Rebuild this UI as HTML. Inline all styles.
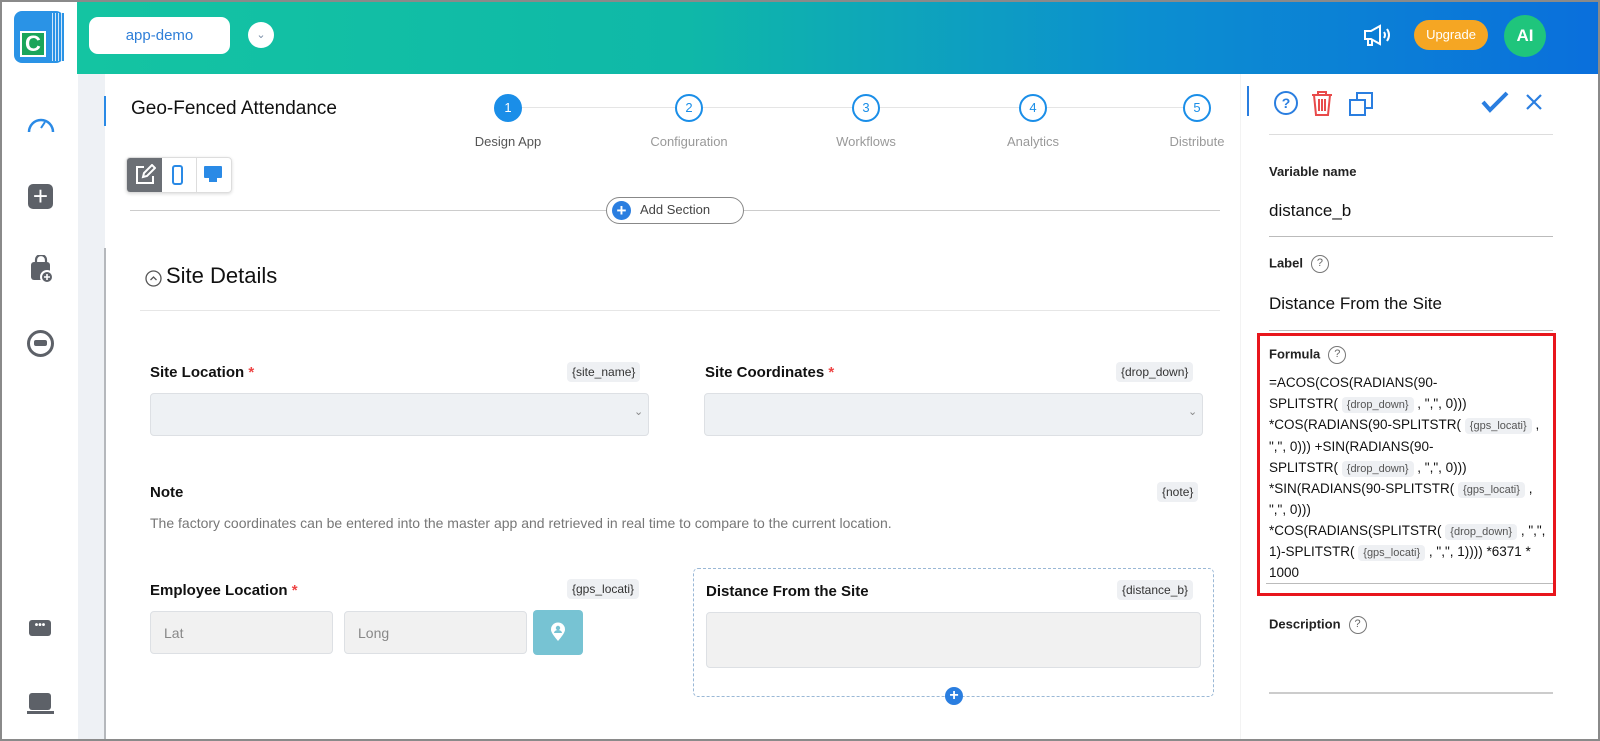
<!DOCTYPE html>
<html><head><meta charset="utf-8"><style>
*{box-sizing:border-box;margin:0;padding:0}
body{width:1600px;height:741px;overflow:hidden;font-family:"Liberation Sans",sans-serif;background:#fff;position:relative;color:#222}
.a{position:absolute}
.frame{left:0;top:0;width:1600px;height:741px;border:2px solid #8a8a8a;border-right:none;z-index:50;pointer-events:none}
.frame2{left:1598px;top:0;width:2px;height:741px;background:#8a8a8a;z-index:50}
.tag{position:absolute;background:#eef0f3;border-radius:4px;font-size:12px;color:#333;padding:3px 5px}
.lbl{position:absolute;font-size:15px;font-weight:bold;color:#111}
.req{color:#e44}
.inp{position:absolute;background:#eef1f4;border:1px solid #dde0e4;border-radius:4px}
.step{position:absolute;width:28px;height:28px;border-radius:50%;border:2px solid #1a8ee8;color:#1a8ee8;font-size:13px;text-align:center;line-height:24px;background:#fff}
.stl{position:absolute;font-size:13px;color:#999;text-align:center;width:120px}
.fl{position:absolute;left:1269px;font-size:13.5px;color:#111;white-space:nowrap}
.ft{background:#eef0f3;border-radius:4px;font-size:11px;color:#555;padding:2px 5px}
.q{display:inline-block;width:18px;height:18px;border:1.5px solid #777;border-radius:50%;font-size:11px;text-align:center;line-height:15px;color:#666;font-weight:normal;vertical-align:middle;margin-left:8px}
</style></head><body>
<div class="a frame"></div><div class="a frame2"></div>
<!-- header -->
<div class="a" style="left:77px;top:0;width:1523px;height:74px;background:linear-gradient(90deg,#14c4a2 0%,#0fb8a8 40%,#0c8fd0 70%,#0a6fdc 100%)"></div>
<div class="a" style="left:0;top:0;width:77px;height:78px;background:#fff"></div>
<div class="a" style="left:14px;top:11px;width:50px;height:52px;background:#2a93e6;border-radius:8px"></div>
<div class="a" style="left:52px;top:13px;width:12px;height:48px;background:repeating-linear-gradient(90deg,#cfe6fa 0 1px,#2a93e6 1px 3px)"></div>
<div class="a" style="left:20px;top:31px;width:26px;height:26px;background:#1aa55a;border:2px solid #fff;color:#fff;font-weight:bold;font-size:22px;text-align:center;line-height:22px">C</div>
<div class="a" style="left:89px;top:17px;width:141px;height:37px;background:#fff;border-radius:9px;color:#2f7fd8;font-size:15px;text-align:center;line-height:37px">app-demo</div>
<div class="a" style="left:248px;top:22px;width:26px;height:26px;background:#fff;border-radius:50%;color:#7a8ea8;font-size:11px;text-align:center;line-height:26px">&#8964;</div>
<svg class="a" style="left:1362px;top:23px" width="32" height="26" viewBox="0 0 32 26" fill="none" stroke="#fff" stroke-width="2"><path d="M3 8h6l9-5v18l-9-5H3z"/><path d="M6 16v6h4v-6"/><path d="M22 9q2 3 0 6M25 6q4 6 0 12"/></svg>
<div class="a" style="left:1414px;top:20px;width:74px;height:30px;background:#f5a623;border-radius:15px;color:#fff;font-size:13px;text-align:center;line-height:30px">Upgrade</div>
<div class="a" style="left:1504px;top:15px;width:42px;height:42px;background:#1fc57c;border-radius:50%;color:#fff;font-size:17px;font-weight:bold;text-align:center;line-height:42px">AI</div>
<!-- sidebar -->
<div class="a" style="left:0;top:78px;width:78px;height:663px;background:#fff"></div>
<div class="a" style="left:78px;top:74px;width:27px;height:667px;background:#eef1f5"></div>
<div class="a" style="left:104px;top:248px;width:2px;height:493px;background:#b5b8bc"></div>
<div class="a" style="left:104px;top:96px;width:2px;height:30px;background:#2a8ae6"></div>
<svg class="a" style="left:25px;top:110px" width="32" height="26" viewBox="0 0 32 26" fill="none" stroke="#2a8ae6" stroke-width="2.5"><path d="M4 22A12 12 0 1 1 28 22"/><path d="M16 18l4-6" stroke-width="2"/></svg>
<div class="a" style="left:28px;top:184px;width:25px;height:25px;background:#5d6168;border-radius:5px;color:#fff;font-size:26px;text-align:center;line-height:24px">+</div>
<svg class="a" style="left:29px;top:255px" width="26" height="30" viewBox="0 0 26 30"><path d="M7 7V5a5 5 0 0 1 10 0v2" fill="none" stroke="#5d6168" stroke-width="2.2"/><rect x="2" y="7" width="19" height="18" rx="3" fill="#5d6168"/><circle cx="18" cy="22" r="6" fill="#5d6168" stroke="#fff" stroke-width="2"/><path d="M15 22h6M18 19v6" stroke="#fff" stroke-width="1.6"/></svg>
<div class="a" style="left:27px;top:330px;width:27px;height:27px;border:3px solid #5d6168;border-radius:50%"></div>
<div class="a" style="left:34px;top:340px;width:13px;height:6px;background:#5d6168;border-radius:2px"></div>
<div class="a" style="left:29px;top:620px;width:22px;height:16px;background:#5d6168;border-radius:3px;color:#fff;font-size:10px;text-align:center;line-height:12px;font-weight:bold">•••</div>
<div class="a" style="left:29px;top:693px;width:22px;height:17px;background:#5d6168;border-radius:3px"></div>
<div class="a" style="left:27px;top:711px;width:27px;height:3px;background:#5d6168"></div>
<!-- title -->
<div class="a" style="left:131px;top:98px;font-size:19px;color:#111">Geo-Fenced Attendance</div>
<div class="a" style="left:126px;top:157px;width:106px;height:36px;border:1px solid #ddd;border-radius:4px;box-shadow:0 1px 3px rgba(0,0,0,.15)"></div>
<div class="a" style="left:127px;top:158px;width:35px;height:34px;background:#6b6f75;border-radius:3px 0 0 3px"></div>
<svg class="a" style="left:134px;top:164px" width="22" height="22" viewBox="0 0 22 22" fill="none" stroke="#fff" stroke-width="2"><path d="M10 3H3v16h16v-7"/><path d="M9 13l1-4 8-8 3 3-8 8z"/></svg>
<div class="a" style="left:172px;top:165px;width:11px;height:20px;border:2px solid #2a8ae6;border-radius:3px"></div>
<div class="a" style="left:196px;top:158px;width:1px;height:34px;background:#ddd"></div>
<div class="a" style="left:204px;top:166px;width:18px;height:12px;background:#2a8ae6;border-radius:1px"></div>
<div class="a" style="left:209px;top:178px;width:8px;height:4px;background:#2a8ae6"></div>
<!-- stepper -->
<div class="a" style="left:508px;top:107px;width:690px;height:1px;background:#e5e5e5"></div>
<div class="step" style="left:494px;top:94px;background:#1a8ee8;color:#fff">1</div>
<div class="step" style="left:675px;top:94px">2</div>
<div class="step" style="left:852px;top:94px">3</div>
<div class="step" style="left:1019px;top:94px">4</div>
<div class="step" style="left:1183px;top:94px">5</div>
<div class="stl" style="left:448px;top:134px;color:#555">Design App</div>
<div class="stl" style="left:629px;top:134px">Configuration</div>
<div class="stl" style="left:806px;top:134px">Workflows</div>
<div class="stl" style="left:973px;top:134px">Analytics</div>
<div class="stl" style="left:1137px;top:134px">Distribute</div>
<!-- add section -->
<div class="a" style="left:130px;top:210px;width:1090px;height:1px;background:#ccc"></div>
<div class="a" style="left:606px;top:197px;width:138px;height:27px;background:#fff;border:1.5px solid #888;border-radius:14px;font-size:13px;color:#444;line-height:24px;padding-left:33px">Add Section</div>
<div class="a" style="left:612px;top:201px;width:19px;height:19px;background:#2a7ee0;border-radius:50%;color:#fff;font-weight:bold;font-size:17px;text-align:center;line-height:19px">+</div>
<!-- section -->
<svg class="a" style="left:145px;top:270px" width="17" height="17" viewBox="0 0 17 17" fill="none" stroke="#555" stroke-width="1.3"><circle cx="8.5" cy="8.5" r="7.5"/><path d="M5.5 10l3-3 3 3"/></svg>
<div class="a" style="left:166px;top:263px;font-size:22px;color:#111">Site Details</div>
<div class="a" style="left:140px;top:310px;width:1080px;height:1px;background:#e6e6e6"></div>
<div class="lbl" style="left:150px;top:364px">Site Location <span class="req">*</span></div>
<div class="tag" style="left:567px;top:362px">{site_name}</div>
<div class="inp" style="left:150px;top:393px;width:499px;height:43px"></div>
<div class="a" style="left:634px;top:405px;color:#888;font-size:11px">&#8964;</div>
<div class="lbl" style="left:705px;top:364px">Site Coordinates <span class="req">*</span></div>
<div class="tag" style="left:1116px;top:362px">{drop_down}</div>
<div class="inp" style="left:704px;top:393px;width:499px;height:43px"></div>
<div class="a" style="left:1188px;top:405px;color:#888;font-size:11px">&#8964;</div>
<div class="lbl" style="left:150px;top:484px">Note</div>
<div class="tag" style="left:1157px;top:482px">{note}</div>
<div class="a" style="left:150px;top:515px;font-size:14px;color:#777">The factory coordinates can be entered into the master app and retrieved in real time to compare to the current location.</div>
<div class="lbl" style="left:150px;top:582px">Employee Location <span class="req">*</span></div>
<div class="tag" style="left:567px;top:579px">{gps_locati}</div>
<div class="inp" style="left:150px;top:611px;width:183px;height:43px;background:#f1f1f1;font-size:14px;color:#888;padding:13px 0 0 13px">Lat</div>
<div class="inp" style="left:344px;top:611px;width:183px;height:43px;background:#f1f1f1;font-size:14px;color:#888;padding:13px 0 0 13px">Long</div>
<div class="a" style="left:533px;top:610px;width:50px;height:45px;background:#77c3d3;border-radius:4px"></div>
<svg class="a" style="left:550px;top:622px" width="16" height="20" viewBox="0 0 16 20"><path d="M8 19C3 13 1 10 1 7.5a7 7 0 0 1 14 0C15 10 13 13 8 19z" fill="#fff"/><circle cx="8" cy="6" r="2.2" fill="#77c3d3"/><path d="M4 11a4 3 0 0 1 8 0z" fill="#77c3d3"/></svg>
<div class="a" style="left:693px;top:568px;width:521px;height:129px;border:1.5px dashed #9ab8d6;border-radius:5px"></div>
<div class="lbl" style="left:706px;top:583px;font-weight:bold">Distance From the Site</div>
<div class="tag" style="left:1117px;top:580px">{distance_b}</div>
<div class="inp" style="left:706px;top:612px;width:495px;height:56px;background:#f1f1f1"></div>
<div class="a" style="left:945px;top:687px;width:18px;height:18px;background:#2a7ee0;border-radius:50%;color:#fff;font-weight:bold;font-size:16px;text-align:center;line-height:18px">+</div>
<!-- right panel -->
<div class="a" style="left:1240px;top:74px;width:1px;height:667px;background:#f3f3f3"></div>
<div class="a" style="left:1247px;top:86px;width:2px;height:30px;background:#2a7ee0"></div>
<div class="a" style="left:1274px;top:91px;width:24px;height:24px;border:2px solid #2a7ee0;border-radius:50%;color:#2a7ee0;font-weight:bold;font-size:14px;text-align:center;line-height:20px">?</div>
<svg class="a" style="left:1310px;top:89px" width="24" height="28" viewBox="0 0 24 28" fill="none" stroke="#e84a4a" stroke-width="2"><path d="M2 6h20M8 6V3h8v3M4 6l2 20h12l2-20M9 10v12M12 10v12M15 10v12"/></svg>
<svg class="a" style="left:1348px;top:90px" width="28" height="28" viewBox="0 0 28 28" fill="none" stroke="#2a7ee0" stroke-width="2"><rect x="2" y="10" width="15" height="15"/><path d="M9 10V3h15v15h-7"/></svg>
<svg class="a" style="left:1481px;top:91px" width="28" height="22" viewBox="0 0 28 22" fill="none" stroke="#2a7ee0" stroke-width="4"><path d="M2 11l7 8L26 2"/></svg>
<svg class="a" style="left:1525px;top:93px" width="18" height="18" viewBox="0 0 18 18" stroke="#2a7ee0" stroke-width="2.2"><path d="M2 2l14 14M16 2L2 16"/></svg>
<div class="a" style="left:1269px;top:134px;width:284px;height:1px;background:#ddd"></div>
<div class="a" style="left:1269px;top:164px;font-size:13px;font-weight:bold;color:#222">Variable name</div>
<div class="a" style="left:1269px;top:201px;font-size:17px;color:#111">distance_b</div>
<div class="a" style="left:1269px;top:236px;width:284px;height:1px;background:#bbb"></div>
<div class="a" style="left:1269px;top:255px;font-size:13px;font-weight:bold;color:#222">Label<span class="q">?</span></div>
<div class="a" style="left:1269px;top:294px;font-size:17px;color:#111">Distance From the Site</div>
<div class="a" style="left:1269px;top:330px;width:284px;height:1px;background:#bbb"></div>
<div class="a" style="left:1257px;top:333px;width:299px;height:263px;border:3px solid #e8161c"></div>
<div class="a" style="left:1269px;top:346px;font-size:13px;font-weight:bold;color:#222">Formula<span class="q">?</span></div>
<div class="fl" style="top:375px">=ACOS(COS(RADIANS(90-</div>
<div class="fl" style="top:396px">SPLITSTR( <span class="ft">{drop_down}</span> , ",", 0)))</div>
<div class="fl" style="top:417px">*COS(RADIANS(90-SPLITSTR( <span class="ft">{gps_locati}</span> ,</div>
<div class="fl" style="top:439px">",", 0))) +SIN(RADIANS(90-</div>
<div class="fl" style="top:460px">SPLITSTR( <span class="ft">{drop_down}</span> , ",", 0)))</div>
<div class="fl" style="top:481px">*SIN(RADIANS(90-SPLITSTR( <span class="ft">{gps_locati}</span> ,</div>
<div class="fl" style="top:502px">",", 0)))</div>
<div class="fl" style="top:523px">*COS(RADIANS(SPLITSTR( <span class="ft">{drop_down}</span> , ",",</div>
<div class="fl" style="top:544px">1)-SPLITSTR( <span class="ft">{gps_locati}</span> , ",", 1)))) *6371 *</div>
<div class="fl" style="top:565px">1000</div>
<div class="a" style="left:1266px;top:583px;width:287px;height:1px;background:#bbb"></div>
<div class="a" style="left:1269px;top:616px;font-size:13px;font-weight:bold;color:#222">Description<span class="q">?</span></div>
<div class="a" style="left:1269px;top:692px;width:284px;height:2px;background:#ccc"></div>
</body></html>
